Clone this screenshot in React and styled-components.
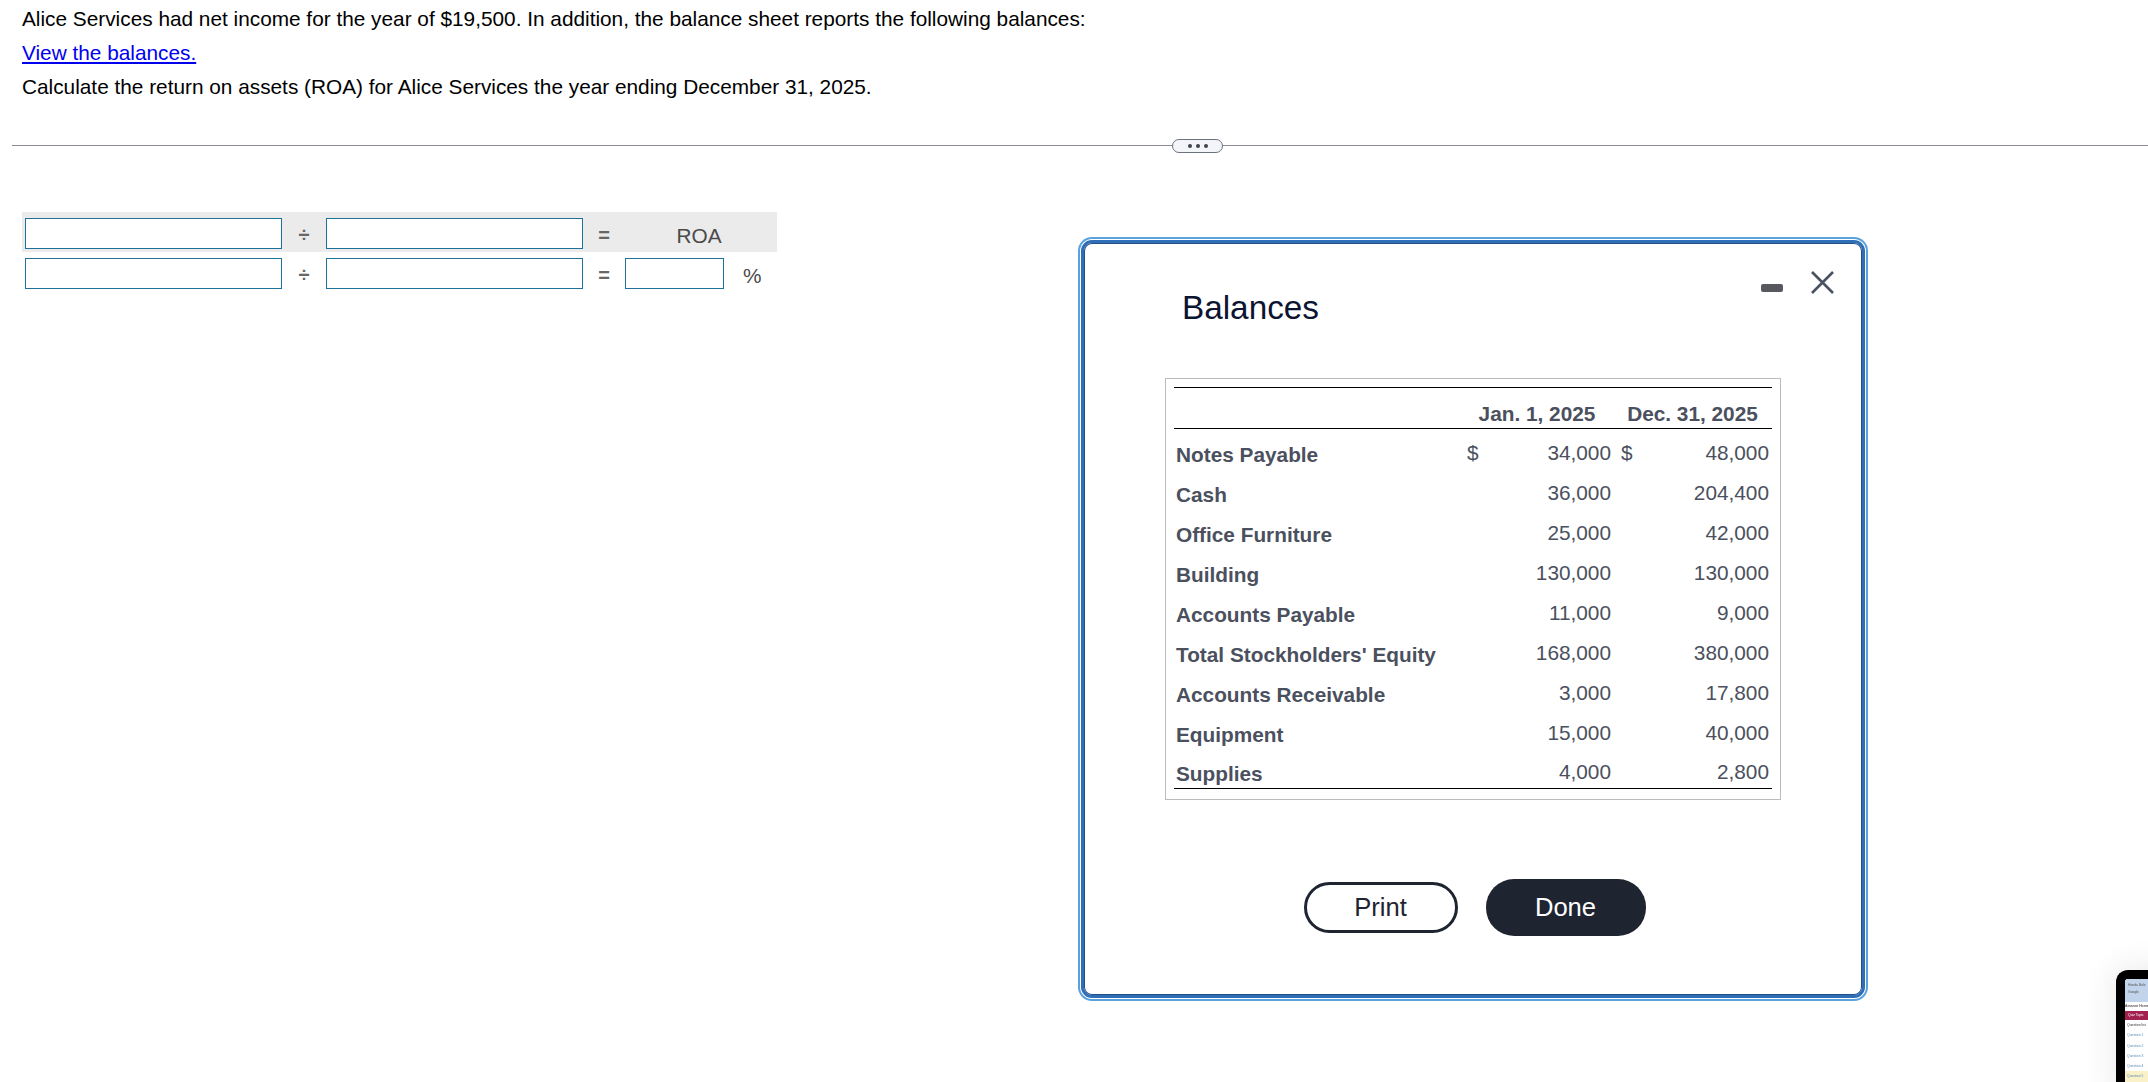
import React from 'react';
import styled, { createGlobalStyle } from 'styled-components';

const GlobalStyle = createGlobalStyle`
    html, body {
        margin      : 0;
        padding     : 0;
        background  : #fff;
        overflow    : hidden;
    }
    body {
        font-family : "Liberation Sans", Arial, sans-serif;
    }
`;

const Page = styled.div`
    position    : relative;
    width       : 2148px;
    height      : 1082px;
    overflow    : hidden;
    background  : #fff;
`;

const Question = styled.div`
    padding     : 2px 0 0 22px;
    font-size   : 20.8px;
    line-height : 34px;
    color       : #000;
`;

const BalancesLink = styled.a`
    color           : #0000ee;
    text-decoration : underline;
`;

const Divider = styled.div`
    display     : flex;
    align-items : center;
    margin      : 35px 0 0 12px;
    height      : 14px;
`;

const DividerLine = styled.div`
    flex            : ${p => p.$grow ? '1' : '0 0 1160px'};
    height          : 1px;
    margin-bottom   : 2px;
    background      : #8c8c96;
`;

const DividerPill = styled.div`
    box-sizing      : border-box;
    display         : flex;
    align-items     : center;
    justify-content : center;
    gap             : 4px;
    width           : 51px;
    height          : 14px;
    border          : 1.5px solid #6c7280;
    border-radius   : 7px;
    background      : #f3f5f8;
`;

const Dot = styled.span`
    width           : 4px;
    height          : 4px;
    border-radius   : 50%;
    background      : #3f4450;
`;

const Formula = styled.div`
    margin      : 59px 0 0 22px;
    width       : 755px;
`;

const FormulaRow = styled.div`
    display         : grid;
    grid-template-columns : 257px 44px 257px 42px 99px 1fr;
    box-sizing      : border-box;
    height          : 40px;
    padding         : 6px 0 3px 3px;
    align-items     : start;
    background      : ${p => p.$shaded ? '#ebebeb' : 'transparent'};
`;

const AmountInput = styled.input`
    box-sizing  : border-box;
    width       : 100%;
    height      : 31px;
    padding     : 0 4px;
    border      : 1px solid #1f7199;
    border-radius : 0;
    background  : #fff;
    outline     : none;
`;

const Operator = styled.span`
    height      : 31px;
    text-align  : center;
    font-size   : 20px;
    font-weight : 700;
    line-height : 35px;
    color       : #666;
`;

const Cell = styled.span`
    grid-column : ${p => p.$span ? 'span 2' : 'auto'};
    height      : 31px;
    padding     : 0 ${p => p.$span ? 4 : 0}px 0 ${p => p.$indent || 0}px;
    text-align  : ${p => p.$align || 'center'};
    font-size   : 20.8px;
    line-height : 36px;
    color       : #4a4a4a;
`;

const Modal = styled.section`
    position        : absolute;
    left            : 1081px;
    top             : 240px;
    box-sizing      : border-box;
    width           : 784px;
    height          : 758px;
    padding         : 0 81px;
    background      : #fff;
    border          : 3px solid #2e6fb8;
    border-radius   : 11px;
    box-shadow      : inset 0 0 0 1px #234f85, 0 0 0 1px #fff, 0 0 0 3px #5aa2dd;
`;

const ModalHeader = styled.header`
    display         : flex;
    justify-content : space-between;
    height          : 84px;
    margin-right    : -53px;
`;

const Title = styled.h2`
    align-self  : flex-end;
    margin      : 0 0 -1px;
    padding-left: 17px;
    font-size   : 33.3px;
    font-weight : 400;
    line-height : 40px;
    color       : #0b1430;
`;

const WindowControls = styled.div`
    display     : flex;
    align-items : flex-end;
    gap         : 28px;
    margin-top  : 28px;
    height      : 23px;
`;

const MinimizeIcon = styled.span`
    width           : 22px;
    height          : 8px;
    margin-bottom   : 2px;
    border-radius   : 2px;
    background      : #56585e;
`;

const TableBox = styled.div`
    box-sizing  : border-box;
    width       : 616px;
    height      : 422px;
    margin-top  : 51px;
    padding     : 8px 8px 0 8px;
    border      : 1px solid #bbb;
`;

const BalanceTable = styled.table`
    width           : 598px;
    table-layout    : fixed;
    border-collapse : collapse;
    border-top      : 1.5px solid #000;
    border-bottom   : 1.5px solid #000;
    color           : #4b505e;
    font-size       : 20.8px;
    line-height     : 24px;
`;

const HeadCell = styled.th`
    box-sizing      : border-box;
    height          : 41px;
    padding         : 0 ${p => p.$pad || 0}px 2px 0;
    vertical-align  : bottom;
    text-align      : center;
    font-weight     : 700;
    border-bottom   : 1.5px solid #000;
`;

const LabelCell = styled.td`
    box-sizing      : border-box;
    height          : 40px;
    padding         : 0 0 2px 2px;
    vertical-align  : bottom;
    font-weight     : 700;
    white-space     : nowrap;
`;

const SignCell = styled.td`
    padding         : 0 0 4px ${p => p.$indent || 0}px;
    vertical-align  : bottom;
`;

const ValueCell = styled.td`
    padding         : 0 ${p => p.$pad}px 4px 0;
    vertical-align  : bottom;
    text-align      : right;
`;

const ButtonRow = styled.div`
    display         : flex;
    align-items     : center;
    justify-content : center;
    gap             : 28px;
    width           : 616px;
    margin-top      : 79px;
    padding-left    : 3px;
    box-sizing      : border-box;
`;

const Button = styled.button`
    box-sizing      : border-box;
    width           : ${p => p.$primary ? '160px' : '154px'};
    height          : ${p => p.$primary ? '57px' : '51px'};
    padding         : 0;
    font-family     : inherit;
    font-size       : 25.6px;
    color           : ${p => p.$primary ? '#fff' : '#1e2430'};
    background      : ${p => p.$primary ? '#1e2430' : '#fff'};
    border          : ${p => p.$primary ? 'none' : '3px solid #1e2430'};
    border-radius   : 28px;
`;

const Preview = styled.aside`
    position        : absolute;
    left            : 2116px;
    top             : 970px;
    box-sizing      : border-box;
    width           : 60px;
    height          : 130px;
    border-top      : 9px solid #000;
    border-left     : 9px solid #000;
    border-radius   : 12px 0 0 0;
    background      : #fff;
    box-shadow      : 0 0 30px 6px rgba(0, 0, 0, .07);
    overflow        : hidden;
`;

const PreviewInner = styled.div`
    filter      : blur(.4px);
    font-size   : 3.4px;
    white-space : nowrap;
    color       : #555;
`;

const PreviewChrome = styled.div`
    height      : 23px;
    background  : #c2d4ec;
    padding     : 3px 0 0 3px;
    box-sizing  : border-box;
    line-height : 7px;
`;

const PreviewTitle = styled.div`
    height      : 9px;
    line-height : 9px;
    font-weight : 700;
`;

const PreviewBar = styled.div`
    height      : 9px;
    line-height : 9px;
    padding-left: 3px;
    color       : #fff;
    background  : #a3214f;
`;

const PreviewRow = styled.div`
    height      : 10.3px;
    line-height : 10.3px;
    padding-left: 2px;
    color       : ${p => p.$head ? '#333' : '#5b8db8'};
    background  : ${p => p.$active ? '#fbf1c9' : 'transparent'};
`;

const balances = [
    ['Notes Payable', '34,000', '48,000', true],
    ['Cash', '36,000', '204,400'],
    ['Office Furniture', '25,000', '42,000'],
    ['Building', '130,000', '130,000'],
    ['Accounts Payable', '11,000', '9,000'],
    ["Total Stockholders' Equity", '168,000', '380,000'],
    ['Accounts Receivable', '3,000', '17,800'],
    ['Equipment', '15,000', '40,000'],
    ['Supplies', '4,000', '2,800'],
];

export default function App() {
    return (
        <Page>
            <GlobalStyle />

            <Question>
                <div>Alice Services had net income for the year of $19,500. In addition, the balance sheet reports the following balances:</div>
                <div><BalancesLink href="#balances">View the balances.</BalancesLink></div>
                <div>Calculate the return on assets (ROA) for Alice Services the year ending December 31, 2025.</div>
            </Question>

            <Divider>
                <DividerLine />
                <DividerPill><Dot /><Dot /><Dot /></DividerPill>
                <DividerLine $grow />
            </Divider>

            <Formula>
                <FormulaRow $shaded>
                    <AmountInput />
                    <Operator>÷</Operator>
                    <AmountInput />
                    <Operator>=</Operator>
                    <Cell $span>ROA</Cell>
                </FormulaRow>
                <FormulaRow>
                    <AmountInput />
                    <Operator>÷</Operator>
                    <AmountInput />
                    <Operator>=</Operator>
                    <AmountInput />
                    <Cell $align="left" $indent={19}>%</Cell>
                </FormulaRow>
            </Formula>

            <Modal>
                <ModalHeader>
                    <Title>Balances</Title>
                    <WindowControls>
                        <MinimizeIcon />
                        <svg width="23" height="23" viewBox="0 0 23 23">
                            <path d="M1 1 L22 22 M22 1 L1 22" stroke="#4a5160" strokeWidth="2.6" fill="none" />
                        </svg>
                    </WindowControls>
                </ModalHeader>

                <TableBox>
                    <BalanceTable>
                        <colgroup>
                            <col style={{ width: 293 }} />
                            <col style={{ width: 24 }} />
                            <col style={{ width: 122 }} />
                            <col style={{ width: 24 }} />
                            <col />
                        </colgroup>
                        <thead>
                            <tr>
                                <HeadCell />
                                <HeadCell colSpan={2} $pad={6}>Jan. 1, 2025</HeadCell>
                                <HeadCell colSpan={2}>Dec. 31, 2025</HeadCell>
                            </tr>
                        </thead>
                        <tbody>
                            {balances.map(([label, jan, dec, sign]) => (
                                <tr key={label}>
                                    <LabelCell>{label}</LabelCell>
                                    <SignCell>{sign && '$'}</SignCell>
                                    <ValueCell $pad={2}>{jan}</ValueCell>
                                    <SignCell $indent={8}>{sign && '$'}</SignCell>
                                    <ValueCell $pad={3}>{dec}</ValueCell>
                                </tr>
                            ))}
                        </tbody>
                    </BalanceTable>
                </TableBox>

                <ButtonRow>
                    <Button>Print</Button>
                    <Button $primary>Done</Button>
                </ButtonRow>
            </Modal>

            <Preview>
                <PreviewInner>
                    <PreviewChrome>
                        <div>Honda Bole</div>
                        <div>Google</div>
                    </PreviewChrome>
                    <PreviewTitle>Amazon Homework</PreviewTitle>
                    <PreviewBar>Quiz Topic</PreviewBar>
                    <PreviewRow $head>Question list</PreviewRow>
                    <PreviewRow>Question 1</PreviewRow>
                    <PreviewRow>Question 2</PreviewRow>
                    <PreviewRow>Question 3</PreviewRow>
                    <PreviewRow>Question 4</PreviewRow>
                    <PreviewRow $active>Question 5</PreviewRow>
                </PreviewInner>
            </Preview>
        </Page>
    );
}
